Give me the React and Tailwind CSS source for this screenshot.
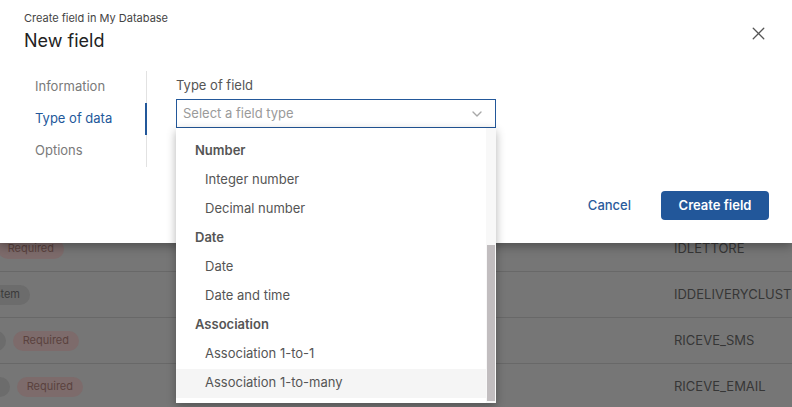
import { X, ChevronDown } from 'lucide-react';

const rows = [
  { name: 'IDLETTORE', cell: 'w-[64px]', badges: ['Required'] },
  { name: 'IDDELIVERYCLUSTER', cell: 'w-[30px]', badges: ['System'] },
  { name: 'RICEVE_SMS', cell: 'w-[79px]', badges: ['Boolean', 'Required'] },
  { name: 'RICEVE_EMAIL', cell: 'w-[83px]', badges: ['Boolean', 'Required'] },
];

const options = [
  { label: 'Number', group: true },
  { label: 'Integer number' },
  { label: 'Decimal number' },
  { label: 'Date', group: true },
  { label: 'Date' },
  { label: 'Date and time' },
  { label: 'Association', group: true },
  { label: 'Association 1-to-1' },
  { label: 'Association 1-to-many', hover: true },
];

const nav = [
  { label: 'Information' },
  { label: 'Type of data', active: true },
  { label: 'Options' },
];

function Badge({ label }) {
  const red = label === 'Required';
  return (
    <span
      className={`flex h-[20px] shrink-0 items-center rounded-full px-[10px] text-[11px] ${
        red ? 'bg-[#7d6b6b] text-[#5a423e]' : 'bg-[#6c6c6c] text-[#3a3a3a]'
      }`}
    >
      {label}
    </span>
  );
}

export default function App() {
  return (
    <div
      className="relative h-[407px] w-[792px] overflow-hidden bg-[#767676]"
      style={{ fontFamily: 'Inter, "Noto Sans", sans-serif' }}
    >
      {/* page behind the dialog */}
      <div className="flex flex-col pt-[226px]">
        {rows.map((r) => (
          <div key={r.name} className="flex h-[46px] items-center border-b border-[#686868]">
            <div className={`flex shrink-0 justify-end gap-[7px] ${r.cell}`}>
              {r.badges.map((b) => (
                <Badge key={b} label={b} />
              ))}
            </div>
            <div className="flex-1" />
            <span className="w-[118px] shrink-0 whitespace-nowrap text-[13px] text-[#363636]">{r.name}</span>
          </div>
        ))}
      </div>

      {/* dialog */}
      <div className="absolute inset-x-0 top-0 flex h-[243px] flex-col bg-white shadow-[0_3px_10px_rgba(0,0,0,0.35)]">
        <div className="flex items-start justify-between pl-6 pr-[23px] pt-[12px]">
          <div>
            <p className="text-[11px] leading-[12px] text-[#444]">Create field in My Database</p>
            <h1 className="mt-[5px] text-[18px] leading-[24px] text-[#222]">New field</h1>
          </div>
          <button className="mt-[11px] text-[#555]">
            <X size={21} strokeWidth={1.5} />
          </button>
        </div>

        <div className="mt-[18px] flex pl-6">
          <div className="flex w-[123px] flex-col border-r border-[#e2e2e2]">
            {nav.map((n) => (
              <div
                key={n.label}
                className={`-mr-px flex h-[32px] items-center pl-[11px] text-[13px] ${
                  n.active ? 'border-r-2 border-[#23589a] text-[#23589a]' : 'text-[#7a7a7a]'
                }`}
              >
                {n.label}
              </div>
            ))}
          </div>

          <div className="pl-[29px] pt-[6px]">
            <label className="block text-[13px] leading-[16px] text-[#555]">Type of field</label>
            <div className="relative mt-[6px] w-[320px]">
              <div className="flex h-[29px] items-center justify-between border border-[#23589a] pl-[6px] pr-[10px]">
                <span className="text-[13px] text-[#9a9a9a]">Select a field type</span>
                <ChevronDown size={16} strokeWidth={2} className="text-[#a8a8a8]" />
              </div>

              <div className="absolute left-0 top-full z-10 flex h-[275px] w-[320px] bg-white shadow-[0_3px_9px_rgba(0,0,0,0.3)]">
                <ul className="flex-1 pt-[8.5px]">
                  {options.map((o, i) => (
                    <li
                      key={i}
                      className={`flex h-[29px] items-center text-[13px] text-[#555] ${
                        o.group ? 'pl-[19px] font-semibold' : 'pl-[29px]'
                      } ${o.hover ? 'bg-[#f5f5f5]' : ''}`}
                    >
                      {o.label}
                    </li>
                  ))}
                </ul>
                <div className="flex w-[10px] flex-col justify-end bg-[#f8f8f8] pb-[2px]">
                  <div className="ml-[1px] h-[156px] w-[8px] bg-[#c1bdbf]" />
                </div>
              </div>
            </div>
          </div>
        </div>

        <div className="mt-auto flex items-center justify-end pb-[23px] pr-[23px]">
          <button className="mr-[30px] text-[13px] font-medium text-[#2a5b9b]">Cancel</button>
          <button className="h-[29px] w-[108px] rounded-[4px] bg-[#22579a] text-[13px] font-semibold text-white">
            Create field
          </button>
        </div>
      </div>
    </div>
  );
}
